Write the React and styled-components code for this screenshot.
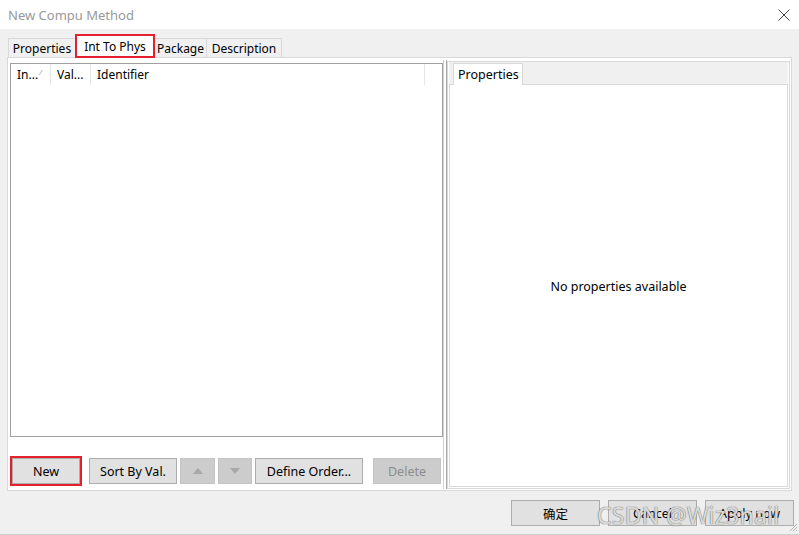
import React from "react"
import styled, { createGlobalStyle } from "styled-components"

const Global = createGlobalStyle`
    html, body {
        margin: 0;
        padding: 0;
        background: #f0f0f0;
    }
    body {
        font-family: "Noto Sans", "Noto Sans CJK SC", sans-serif;
        font-size: 12px;
        color: #000;
    }
`

const Window = styled.div`
    position: relative;
    width: 799px;
    height: 535px;
    background: #f0f0f0;
    display: flex;
    flex-direction: column;
    box-sizing: border-box;
    border-bottom: 1px solid #cfcfcf;
    overflow: hidden;
`

const TitleBar = styled.div`
    height: 29px;
    background: #fff;
    display: flex;
    align-items: center;
    justify-content: space-between;
    padding: 0 9px 0 8px;
    flex-shrink: 0;
`

const Title = styled.span`
    font-size: 13px;
    color: #999;
`

const Body = styled.div`
    display: flex;
    flex-direction: column;
    padding: 0 7px;
`

const TabStrip = styled.div`
    height: 28px;
    display: flex;
    align-items: flex-end;
    padding-left: 1px;
`

const Tab = styled.div`
    position: relative;
    box-sizing: border-box;
    width: ${p => p.w}px;
    height: ${p => (p.active ? 24 : 19)}px;
    margin-bottom: ${p => (p.active ? -1 : 0)}px;
    display: flex;
    align-items: center;
    justify-content: center;
    white-space: nowrap;
    background: ${p => (p.active ? "#fff" : "#f0f0f0")};
    border: ${p => (p.active ? "2px solid #e5202e" : "1px solid #d9d9d9")};
    border-bottom: ${p => (p.active ? "2px solid #e5202e" : "none")};
    z-index: ${p => (p.active ? 2 : 1)};
    & + & {
        margin-left: ${p => (p.active ? 0 : -1)}px;
    }
`

const TabPage = styled.div`
    box-sizing: border-box;
    height: 434px;
    background: #fff;
    border: 1px solid #d9d9d9;
    display: flex;
    padding: 0 1px 0 2px;
`

const LeftPane = styled.div`
    width: 433px;
    display: flex;
    flex-direction: column;
    padding-top: 5px;
`

const ListBox = styled.div`
    box-sizing: border-box;
    height: 374px;
    border: 1px solid #a0a0a0;
    background: #fff;
`

const HeaderRow = styled.div`
    display: flex;
    height: 21px;
`

const HeaderCell = styled.div`
    box-sizing: border-box;
    width: ${p => p.w}px;
    display: flex;
    align-items: center;
    padding-left: 6px;
    border-right: 1px solid #e5e5e5;
    white-space: nowrap;
    ${p => p.grow && "flex: 1; border-right: none;"}
`

const SortMark = styled.span`
    font-size: 7px;
    color: #777;
    margin-left: 2px;
    align-self: flex-start;
    margin-top: 4px;
`

const ButtonRow = styled.div`
    display: flex;
    gap: 3px;
    margin-top: 21px;
    padding: 0 2px;
`

const Button = styled.div`
    position: relative;
    box-sizing: border-box;
    width: ${p => p.w}px;
    height: 26px;
    display: flex;
    align-items: center;
    justify-content: center;
    white-space: nowrap;
    font-size: 12.5px;
    background: ${p => (p.disabled ? "#cccccc" : "#e1e1e1")};
    border: 1px solid ${p => (p.disabled ? "#c4c4c4" : "#adadad")};
    color: ${p => (p.disabled ? "#8c8c8c" : "#000")};
`

const NewButton = styled(Button)`
    margin-right: 6px;
    &::after {
        content: "";
        position: absolute;
        inset: -3px;
        border: 2px solid #e5202e;
    }
`

const DeleteButton = styled(Button)`
    margin-left: auto;
`

const Splitter = styled.div`
    width: 4px;
    margin: 2px 0 1px;
    box-sizing: border-box;
    border-left: 1px solid #d0d0d0;
    border-right: 1px solid #a8a8a8;
`

const RightPane = styled.div`
    flex: 1;
    margin: 3px 0 1px;
    box-sizing: border-box;
    border: 1px solid #d9d9d9;
    display: flex;
    flex-direction: column;
    padding: 0 1px 1px 1px;
`

const SubStrip = styled.div`
    height: 22px;
    background: #f0f0f0;
    display: flex;
    align-items: flex-end;
    padding-left: 4px;
`

const SubTab = styled.div`
    box-sizing: border-box;
    width: 70px;
    height: 22px;
    margin-bottom: -1px;
    display: flex;
    align-items: center;
    padding-left: 4px;
    background: #fff;
    border: 1px solid #d9d9d9;
    border-bottom: none;
    font-size: 12.5px;
    z-index: 1;
`

const SubContent = styled.div`
    flex: 1;
    border: 1px solid #d9d9d9;
    background: #fff;
    display: flex;
    align-items: center;
    justify-content: center;
    font-size: 12.5px;
    padding-top: 2px;
`

const Footer = styled.div`
    display: flex;
    justify-content: flex-end;
    gap: 8px;
    padding: 9px 5px 0 0;
`

const Grip = styled.svg`
    position: absolute;
    right: 1px;
    bottom: 2px;
`

const Watermark = styled.div`
    position: absolute;
    left: 597px;
    top: 499px;
    font-size: 23px;
    letter-spacing: 0.3px;
    color: rgba(255, 255, 255, 0.75);
    text-shadow: 0 0 1px #6d6d6d, 0 0 1px #6d6d6d;
    pointer-events: none;
    white-space: nowrap;
`

const Triangle = ({ down }) =>
    <svg width="10" height="6" viewBox="0 0 10 6">
        <path d={down ? "M0 0 L10 0 L5 6 Z" : "M0 6 L10 6 L5 0 Z"} fill="#a8a8a8"/>
    </svg>

const CloseIcon = () =>
    <svg width="12" height="12" viewBox="0 0 12 12">
        <path d="M0.5 0.5 L11.5 11.5 M11.5 0.5 L0.5 11.5" stroke="#444" strokeWidth="1" fill="none"/>
    </svg>

export default function App() {
    return (
        <>
            <Global/>
            <Window>
                <TitleBar>
                    <Title>New Compu Method</Title>
                    <CloseIcon/>
                </TitleBar>
                <Body>
                    <TabStrip>
                        <Tab w={68}>Properties</Tab>
                        <Tab w={80} active>Int To Phys</Tab>
                        <Tab w={53}>Package</Tab>
                        <Tab w={76}>Description</Tab>
                    </TabStrip>
                    <TabPage>
                        <LeftPane>
                            <ListBox>
                                <HeaderRow>
                                    <HeaderCell w={40}>In...<SortMark>⁄</SortMark></HeaderCell>
                                    <HeaderCell w={40}>Val...</HeaderCell>
                                    <HeaderCell w={334}>Identifier</HeaderCell>
                                    <HeaderCell grow/>
                                </HeaderRow>
                            </ListBox>
                            <ButtonRow>
                                <NewButton w={68}>New</NewButton>
                                <Button w={88}>Sort By Val.</Button>
                                <Button w={35} disabled><Triangle/></Button>
                                <Button w={34} disabled><Triangle down/></Button>
                                <Button w={108}>Define Order...</Button>
                                <DeleteButton w={68} disabled>Delete</DeleteButton>
                            </ButtonRow>
                        </LeftPane>
                        <Splitter/>
                        <RightPane>
                            <SubStrip>
                                <SubTab>Properties</SubTab>
                            </SubStrip>
                            <SubContent>No properties available</SubContent>
                        </RightPane>
                    </TabPage>
                </Body>
                <Footer>
                    <Button w={89}>确定</Button>
                    <Button w={89}>Cancel</Button>
                    <Button w={89}>Apply now</Button>
                </Footer>
                <Grip width="10" height="10" viewBox="0 0 10 10">
                    <path d="M9 2 L2 9 M9 5 L5 9 M9 8 L8 9" stroke="#b5b5b5" strokeWidth="1"/>
                </Grip>
                <Watermark>CSDN @Wiz3nail</Watermark>
            </Window>
        </>
    )
}
